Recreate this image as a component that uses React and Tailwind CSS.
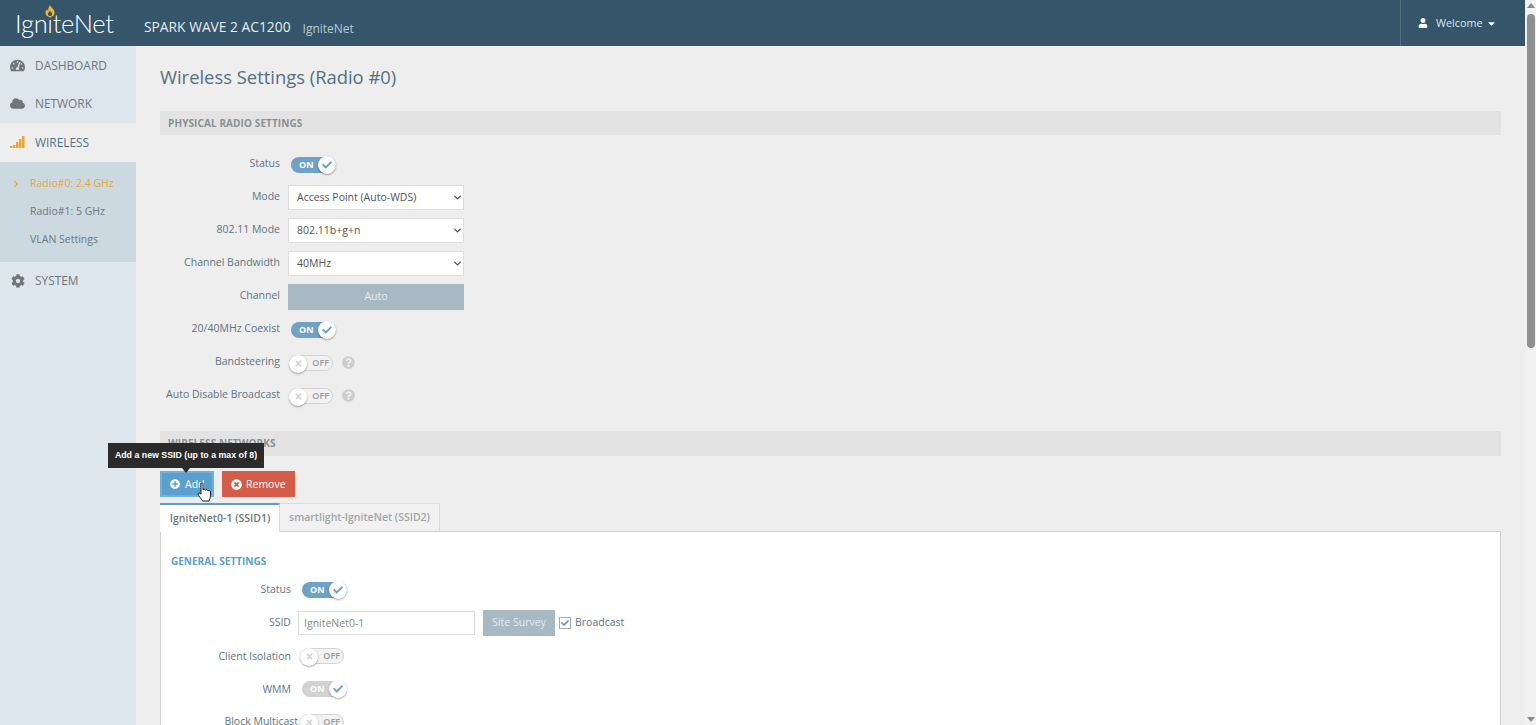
import React from 'react';
import {
  FaTachometerAlt,
  FaCloud,
  FaCog,
  FaUser,
  FaCaretDown,
  FaPlusCircle,
  FaTimesCircle,
  FaCheck,
  FaTimes,
  FaChevronRight,
  FaQuestionCircle,
} from 'react-icons/fa';
import { ChevronDown } from 'lucide-react';

function SignalIcon() {
  return (
    <svg width="15" height="14" viewBox="0 0 15 14" fill="#e8a633">
      <rect x="0" y="11" width="2.500" height="2" />
      <rect x="3" y="10" width="2.500" height="3" />
      <rect x="6" y="7" width="2.500" height="6" />
      <rect x="9" y="4" width="2.500" height="9" />
      <rect x="12" y="1" width="2.500" height="12" />
    </svg>
  );
}

function Flame() {
  return (
    <svg className="absolute left-[30px] top-[-6px]" width="10" height="12" viewBox="0 0 11 13">
      <path d="M5.5 0C6 2.5 10.5 4.500 10.500 8.500C10.500 11 8.500 13 5.500 13C2.500 13 .5 11 .5 8.500C.5 6.500 1.500 5.500 2.300 4.500C2.600 5.500 3 6 3.600 6.300C3.300 4 4.300 2 5.500 0Z" fill="#f2b632" />
      <path d="M5.500 6C6.300 7.500 7.800 8.500 7.800 10C7.800 11.300 6.800 12 5.500 12C4.200 12 3.200 11.300 3.200 10C3.200 8.500 4.700 7.500 5.500 6Z" fill="#34556a" />
    </svg>
  );
}

function NavItem({ icon, label, active }) {
  return (
    <div className={`h-[38.500px] flex items-center pl-[10px] gap-[10px] text-[11.900px] ${active ? 'bg-[#eeeeee] text-[#52748a]' : 'text-[#6f7679]'}`}>
      <span className="w-[15px] flex justify-center">{icon}</span>
      <span className="pt-[1px]">{label}</span>
    </div>
  );
}

function Toggle({ on, dim }) {
  if (on) {
    return (
      <div className={`relative w-[45px] h-[16px] rounded-full flex items-center pl-[8px] text-[9px] font-bold text-white ${dim ? 'bg-[#d2d2d2]' : 'bg-[#6ea2c7]'}`}>
        ON
        <span className="absolute right-0 top-[-1px] w-[18px] h-[18px] rounded-full bg-white shadow-[0_1px_2px_rgba(0,0,0,0.35)] flex items-center justify-center">
          <FaCheck className="text-[#6ea2c7] text-[10px]" />
        </span>
      </div>
    );
  }
  return (
    <div className="relative w-[44px] h-[16px] rounded-full border border-[#d4d4d4] bg-[#f2f2f2] flex items-center justify-end pr-[3px] text-[9px] font-semibold text-[#9a9a9a]">
      OFF
      <span className="absolute left-[-1px] top-[-1px] w-[18px] h-[18px] rounded-full bg-white shadow-[0_1px_2px_rgba(0,0,0,0.35)] flex items-center justify-center">
        <FaTimes className="text-[#d6d6d6] text-[9px]" />
      </span>
    </div>
  );
}

function Row({ label, labelWidth = 'w-[120px] pb-[1px]', children }) {
  return (
    <div className="h-[33px] flex items-center">
      <div className={`${labelWidth} shrink-0 text-right text-[10.500px] text-[#5d7484] whitespace-nowrap flex justify-end`}>{label}</div>
      <div className="ml-[8px] flex items-center">{children}</div>
    </div>
  );
}

function Select({ value }) {
  return (
    <div className="relative w-[176px] h-[25px]">
      <select defaultValue={value} className="block appearance-none w-full h-full bg-white border border-[#dedede] pl-[8px] text-[10.500px] text-[#555555]">
        <option>{value}</option>
      </select>
      <ChevronDown size={11} strokeWidth={3} className="absolute right-[1px] top-[7px] text-[#555555]" />
    </div>
  );
}

function SectionBar({ children, className }) {
  return (
    <div className={`bg-[#e3e3e3] flex items-center pl-[8px] text-[10px] font-bold text-[#8a8f92] tracking-[0.1px] ${className}`}>
      {children}
    </div>
  );
}

function Help() {
  return <FaQuestionCircle className="ml-[9px] text-[#cccccc] text-[13px]" />;
}

export default function App() {
  return (
    <div className="h-screen overflow-hidden flex bg-[#eeeeee] font-['Open_Sans',sans-serif]">
      <div className="flex-1 min-w-0 flex flex-col">
        {/* Top bar */}
        <header className="h-[46px] shrink-0 bg-[#34556a] flex items-center text-white">
          <div className="relative ml-[15px] mt-[1px] w-[129px] font-['Lato',sans-serif] font-light text-[25.500px] leading-none tracking-[-0.3px]">
            IgniteNet
            <Flame />
          </div>
          <span className="mt-[9px] text-[13.800px] text-[#e6ecef]">SPARK WAVE 2 AC1200</span>
          <span className="ml-[12px] mt-[11px] text-[12px] text-[#b9c8d2]">IgniteNet</span>
          <div className="ml-auto h-full w-[125px] border-l border-[#55707f] flex items-center pl-[17px] text-[10.800px] text-[#dfe7ec]">
            <FaUser className="text-[10px] text-white mr-[8px]" />
            <span>Welcome</span>
            <FaCaretDown className="text-[11px] text-white ml-[4px]" />
          </div>
        </header>

        <div className="flex-1 min-h-0 flex">
          {/* Sidebar */}
          <aside className="w-[136px] shrink-0 bg-[#dde6ec]">
            <NavItem icon={<FaTachometerAlt className="text-[15px]" />} label="DASHBOARD" />
            <NavItem icon={<FaCloud className="text-[15px]" />} label="NETWORK" />
            <NavItem icon={<SignalIcon />} label="WIRELESS" active />
            <div className="h-[100px] bg-[#ccd9e1] pt-[8px] text-[10.500px] text-[#6f7679]">
              <div className="h-[28px] flex items-center pl-[12px] text-[#e8a633]">
                <FaChevronRight className="text-[8px] mr-[10px]" />
                Radio#0: 2.4 GHz
              </div>
              <div className="h-[28px] flex items-center pl-[30px]">Radio#1: 5 GHz</div>
              <div className="h-[28px] flex items-center pl-[30px]">VLAN Settings</div>
            </div>
            <NavItem icon={<FaCog className="text-[14px]" />} label="SYSTEM" />
          </aside>

          {/* Main */}
          <main className="relative flex-1 min-w-0 px-[24px]">
            <h1 className="h-[65px] pb-[3px] flex items-center text-[18.400px] text-[#55707f]">Wireless Settings (Radio #0)</h1>
            <SectionBar className="h-[24px]">PHYSICAL RADIO SETTINGS</SectionBar>

            <div className="mt-[13px] mb-[19px]">
              <Row label="Status"><div className="ml-[3px]"><Toggle on /></div></Row>
              <Row label="Mode"><Select value="Access Point (Auto-WDS)" /></Row>
              <Row label="802.11 Mode"><Select value="802.11b+g+n" /></Row>
              <Row label="Channel Bandwidth"><Select value="40MHz" /></Row>
              <Row label="Channel">
                <div className="w-[176px] h-[26px] bg-[#a8b9c4] flex items-center justify-center text-[10.500px] text-[#e4eaee]">Auto</div>
              </Row>
              <Row label="20/40MHz Coexist"><div className="ml-[3px]"><Toggle on /></div></Row>
              <Row label="Bandsteering"><div className="ml-[1px] flex items-center"><Toggle /><Help /></div></Row>
              <Row label="Auto Disable Broadcast"><div className="ml-[1px] flex items-center"><Toggle /><Help /></div></Row>
            </div>

            <SectionBar className="h-[25px]">WIRELESS NETWORKS</SectionBar>

            <div className="mt-[15px] flex gap-[8px] text-[10.500px] text-white">
              <div className="w-[54px] h-[26px] bg-[#5a9fcd] border-2 border-[#6fb1dc] flex items-center pl-[8px]">
                <FaPlusCircle className="text-[10px] mr-[5px]" />
                <span className="pt-[1px]">Add</span>
              </div>
              <div className="w-[73px] h-[26px] bg-[#d45c48] flex items-center pl-[9px]">
                <FaTimesCircle className="text-[11px] mr-[4px]" />
                <span className="pt-[1px]">Remove</span>
              </div>
            </div>

            {/* Tabs */}
            <div className="mt-[6px] flex text-[10.500px] font-semibold">
              <div className="relative z-10 w-[120px] h-[29px] bg-white border-t-2 border-[#5a9fcd] border-r border-r-[#d6dde2] flex items-center justify-center pl-[1px] text-[#6f7679]">
                IgniteNet0-1 (SSID1)
              </div>
              <div className="w-[160px] h-[28px] bg-[#f1f1f1] border-t border-r border-[#d6dde2] flex items-center justify-center text-[#a2a5a7]">
                smartlight-IgniteNet (SSID2)
              </div>
            </div>

            <div className="-mt-[1px] h-[300px] bg-white border border-[#cfcfcf] pt-[22px]">
              <div className="pl-[10px] text-[10px] font-bold text-[#5a9fcd] leading-[14px]">GENERAL SETTINGS</div>
              <div className="mt-[5px]">
                <Row label="Status" labelWidth="w-[130px] pt-[1px]"><div className="ml-[3px]"><Toggle on /></div></Row>
                <Row label="SSID" labelWidth="w-[130px] pt-[1px]">
                  <input defaultValue="IgniteNet0-1" className="-ml-[1px] w-[177px] h-[24px] border border-[#dedede] pl-[5px] text-[10.500px] text-[#888888]" />
                  <div className="ml-[8px] w-[72px] h-[26px] bg-[#a8b9c4] flex items-center justify-center text-[10.500px] text-[#e4eaee]">Site Survey</div>
                  <span className="ml-[4px] w-[12px] h-[12px] border border-[#aaaaaa] bg-white flex items-center justify-center">
                    <FaCheck className="text-[#4a90c8] text-[8px]" />
                  </span>
                  <span className="ml-[4px] text-[10.500px] text-[#5d7484]">Broadcast</span>
                </Row>
                <Row label="Client Isolation" labelWidth="w-[130px] pt-[2px]"><div className="ml-[1px]"><Toggle /></div></Row>
                <Row label="WMM" labelWidth="w-[130px] pt-[2px]"><div className="ml-[3px]"><Toggle on dim /></div></Row>
                <Row label="Block Multicast" labelWidth="w-[137px] pt-[1px]"><div className="-ml-[6px]"><Toggle /></div></Row>
              </div>
            </div>

            {/* Tooltip over the Add button */}
            <div className="absolute left-[-28px] top-[397px] w-[156px] h-[25px] bg-[#2b2b2b] flex items-center justify-center text-[8.800px] font-bold text-white font-['Liberation_Sans',sans-serif] whitespace-nowrap">
              Add a new SSID (up to a max of 8)
              <span className="absolute left-[74px] bottom-[-5px] w-0 h-0 border-x-[4px] border-x-transparent border-t-[5px] border-t-[#2b2b2b]" />
            </div>
            {/* Mouse pointer */}
            <svg className="absolute left-[61px] top-[436px]" width="15" height="20" viewBox="0 0 15 20">
              <path d="M4 1.200C4.800.4 6 .8 6 2V8C6.500 7 8 7 8.500 8.200C9.200 7.400 10.600 7.600 11 8.800C11.800 8.200 13.500 8.500 13.500 10V14C13.500 16 12.500 17 12 19H5.500C5 17.500 1 13.500 1 12C1 10.800 2.500 10.500 4 12V2Z" fill="#ffffff" stroke="#222222" strokeWidth="1" strokeLinejoin="round" />
            </svg>
          </main>
        </div>
      </div>

      {/* Browser scrollbar */}
      <div className="w-[11px] shrink-0 bg-[#f1f1f1] flex flex-col items-center">
        <span className="mt-[3px] w-0 h-0 border-x-[4px] border-x-transparent border-b-[5px] border-b-[#8a8a8a]" />
        <div className="mt-[6px] w-[8px] h-[334px] bg-[#8f8f8f] rounded-full" />
        <span className="mt-auto mb-[3px] w-0 h-0 border-x-[4px] border-x-transparent border-t-[5px] border-t-[#8a8a8a]" />
      </div>
    </div>
  );
}
